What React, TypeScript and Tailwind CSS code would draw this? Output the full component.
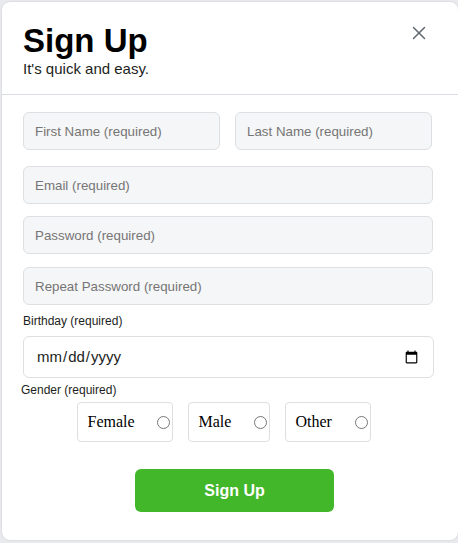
import React from 'react';
import { X } from 'lucide-react';

const inputClass =
  'h-[38px] rounded-[6px] border border-[#dddfe2] bg-[#f5f6f7] px-[11px] text-[13.333px] text-[#1c1e21] placeholder:text-[#757575] outline-none';

const App = () => {
  const genders = [
    { label: 'Female', width: 'w-[96px]' },
    { label: 'Male', width: 'w-[82px]' },
    { label: 'Other', width: 'w-[86px]' },
  ];

  return (
    <div className="min-h-screen bg-[#e9eaed] pl-[2px] pt-[2px] font-['Liberation_Sans',Arial,sans-serif]">
      <div className="h-[538px] w-[456px] rounded-[8px] bg-white shadow-[0_0_2px_rgba(0,0,0,0.15)]">
        {/* Header */}
        <div className="relative h-[93px] border-b border-[#dadde1] px-[21px] pt-[20px]">
          <h1 className="text-[33px] font-bold leading-[38px] text-black">Sign Up</h1>
          <p className="text-[15px] leading-[18px] text-[#1c1e21]">It's quick and easy.</p>
          <button className="absolute right-[28px] top-[20px] text-[#606770]">
            <X size={22} strokeWidth={1.6} />
          </button>
        </div>

        {/* Form */}
        <form className="flex flex-col px-[21px] pt-[17px]">
          <div className="flex gap-[15px]">
            <input className={inputClass + ' w-[197px]'} placeholder="First Name (required)" />
            <input className={inputClass + ' w-[197px]'} placeholder="Last Name (required)" />
          </div>
          <input className={inputClass + ' mt-[16px] w-[410px]'} placeholder="Email (required)" />
          <input className={inputClass + ' mt-[12px] w-[410px]'} placeholder="Password (required)" type="password" />
          <input className={inputClass + ' mt-[13px] w-[410px]'} placeholder="Repeat Password (required)" type="password" />

          <label className="mt-[8px] text-[12px] leading-[16px] text-[#1c1e21]">Birthday (required)</label>
          <input
            type="date"
            className="mt-[7px] h-[42px] w-[411px] rounded-[6px] border border-[#dddfe2] bg-white px-[12px] text-[15px] text-[#1c1e21] outline-none"
          />

          <label className="-ml-[2px] mt-[4px] text-[12px] leading-[16px] text-[#1c1e21]">Gender (required)</label>
          <div className="mt-[4px] flex justify-center gap-[15px] pr-[13px]">
            {genders.map((g) => (
              <label
                key={g.label}
                className={`flex h-[40px] ${g.width} items-center justify-between rounded-[4px] border border-[#dddfe2] pl-[10px] pr-[2px] font-['Liberation_Serif','Times_New_Roman',serif] text-[16px] text-black`}
              >
                {g.label}
                <input type="radio" name="gender" className="h-[13px] w-[13px]" />
              </label>
            ))}
          </div>

          <div className="mt-[27px] flex justify-center pl-[9px]">
            <button
              type="button"
              className="h-[43px] w-[199px] rounded-[6px] bg-[#42b72a] text-[16px] font-bold text-white"
            >
              Sign Up
            </button>
          </div>
        </form>
      </div>
    </div>
  );
};

export default App;
